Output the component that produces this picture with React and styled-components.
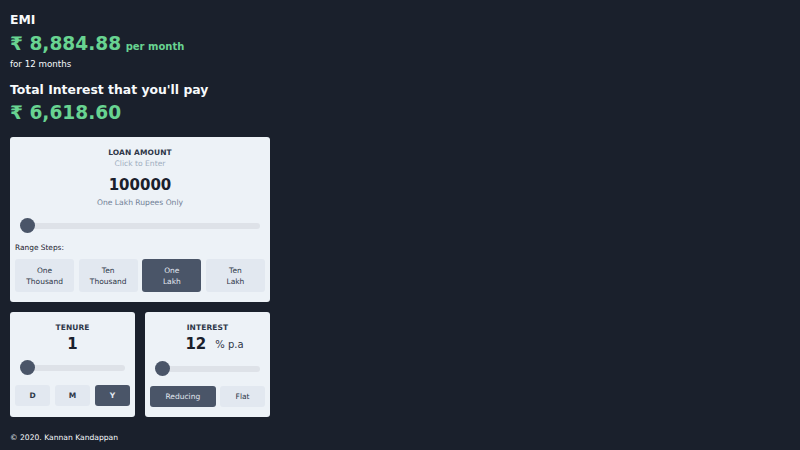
import React, { useState } from "react";
import styled, { createGlobalStyle } from "styled-components";

const GlobalStyle = createGlobalStyle`
  html, body {
    margin: 0;
    padding: 0;
    background: #1a202c;
    font-family: "DejaVu Sans", "Liberation Sans", sans-serif;
  }
`;

const Page = styled.div`
  width: 800px;
  height: 450px;
  box-sizing: border-box;
  padding: 11.5px 10px 0 10px;
  background: #1a202c;
  color: #f7fafc;
`;

const Heading = styled.div`
  font-size: 12.4px;
  font-weight: bold;
  line-height: 16px;
  margin-top: ${(p) => p.gap || 0}px;
`;

const Amount = styled.div`
  color: #68d391;
  font-size: 18.6px;
  font-weight: bold;
  line-height: 24px;
  margin-top: ${(p) => p.gap}px;
`;

const PerMonth = styled.span`
  font-size: 10px;
  margin-left: 1px;
`;

const Note = styled.div`
  font-size: 8.7px;
  line-height: 12px;
  margin-top: -0.5px;
`;

const Card = styled.div`
  background: #edf2f7;
  border-radius: 3px;
  color: #2d3748;
  box-sizing: border-box;
  width: ${(p) => p.width}px;
  padding: 10px 5px ${(p) => p.bottom}px;
  text-align: center;
`;

const LoanCard = styled(Card)`
  margin-top: 12px;
`;

const CardRow = styled.div`
  display: flex;
  gap: 10px;
  margin-top: 10px;
`;

const Label = styled.div`
  font-size: 7.5px;
  font-weight: bold;
  line-height: 11px;
  letter-spacing: 0.1px;
`;

const Hint = styled.div`
  font-size: 7.6px;
  line-height: 11px;
  color: ${(p) => p.color};
  margin-top: ${(p) => p.gap || 0}px;
`;

const Value = styled.div`
  font-size: 15px;
  font-weight: bold;
  color: #1a202c;
  line-height: 20px;
  margin-top: ${(p) => p.gap}px;
  padding-left: ${(p) => p.indent || 0}px;
`;

const Unit = styled.span`
  font-size: 10px;
  font-weight: normal;
  color: #2d3748;
  margin-left: 9px;
  vertical-align: 1px;
`;

const Slider = styled.input`
  -webkit-appearance: none;
  appearance: none;
  display: block;
  box-sizing: border-box;
  width: calc(100% - 10px);
  height: 6px;
  margin: ${(p) => p.top}px 5px ${(p) => p.bottom}px;
  padding: 0;
  background: #dee2e8;
  border-radius: 3px;
  outline: none;

  &::-webkit-slider-thumb {
    -webkit-appearance: none;
    width: 15px;
    height: 15px;
    border-radius: 50%;
    background: #4a5568;
  }
`;

const StepsLabel = styled.div`
  text-align: left;
  font-size: 7.4px;
  line-height: 11px;
  color: #1a202c;
  margin-bottom: 5.8px;
`;

const ButtonRow = styled.div`
  display: flex;
  gap: ${(p) => p.gap}px;
`;

const Choice = styled.button`
  flex: ${(p) => (p.auto ? "1 1 auto" : "1 1 0")};
  min-width: 0;
  height: ${(p) => p.height}px;
  border: none;
  border-radius: 3px;
  padding: 0;
  font-family: inherit;
  font-size: 7.5px;
  font-weight: ${(p) => (p.bold ? 600 : "normal")};
  line-height: 11px;
  background: ${(p) => (p.active ? "#4a5568" : "#e2e8f0")};
  color: ${(p) => (p.active ? "#e2e8f0" : "#2d3748")};
  cursor: pointer;
`;

const Footer = styled.div`
  font-size: 7.6px;
  line-height: 11px;
  margin-top: 15px;
  color: #f7fafc;
`;

const steps = [
  ["One", "Thousand"],
  ["Ten", "Thousand"],
  ["One", "Lakh"],
  ["Ten", "Lakh"],
];

export default function App() {
  const [step, setStep] = useState(2);
  const [unit, setUnit] = useState("Y");
  const [mode, setMode] = useState("Reducing");

  return (
    <Page>
      <GlobalStyle />
      <Heading>EMI</Heading>
      <Amount gap={4}>
        ₹ 8,884.88<PerMonth> per month</PerMonth>
      </Amount>
      <Note>for 12 months</Note>
      <Heading gap={12}>Total Interest that you'll pay</Heading>
      <Amount gap={3}>₹ 6,618.60</Amount>

      <LoanCard width={260} bottom={9.4}>
        <Label>LOAN AMOUNT</Label>
        <Hint color="#a0aec0">Click to Enter</Hint>
        <Value gap={6}>100000</Value>
        <Hint color="#718096" gap={1.5}>One Lakh Rupees Only</Hint>
        <Slider type="range" min="0" max="100" defaultValue="0" top={15.2} bottom={13.8} />
        <StepsLabel>Range Steps:</StepsLabel>
        <ButtonRow gap={4.5}>
          {steps.map((s, i) => (
            <Choice key={i} height={33} active={step === i} onClick={() => setStep(i)}>
              {s[0]}
              <br />
              {s[1]}
            </Choice>
          ))}
        </ButtonRow>
      </LoanCard>

      <CardRow>
        <Card width={125} bottom={10}>
          <Label>TENURE</Label>
          <Value gap={1}>1</Value>
          <Slider type="range" min="0" max="100" defaultValue="0" top={11.3} bottom={14.4} />
          <ButtonRow gap={5}>
            {["D", "M", "Y"].map((u) => (
              <Choice key={u} bold height={21} active={unit === u} onClick={() => setUnit(u)}>
                {u}
              </Choice>
            ))}
          </ButtonRow>
        </Card>
        <Card width={125} bottom={10}>
          <Label>INTEREST</Label>
          <Value gap={1} indent={14}>
            12<Unit>% p.a</Unit>
          </Value>
          <Slider type="range" min="0" max="100" defaultValue="0" top={11.3} bottom={14.4} />
          <ButtonRow gap={4.5}>
            {["Reducing", "Flat"].map((m) => (
              <Choice key={m} auto height={21} active={mode === m} onClick={() => setMode(m)}>
                {m}
              </Choice>
            ))}
          </ButtonRow>
        </Card>
      </CardRow>

      <Footer>© 2020. Kannan Kandappan</Footer>
    </Page>
  );
}
